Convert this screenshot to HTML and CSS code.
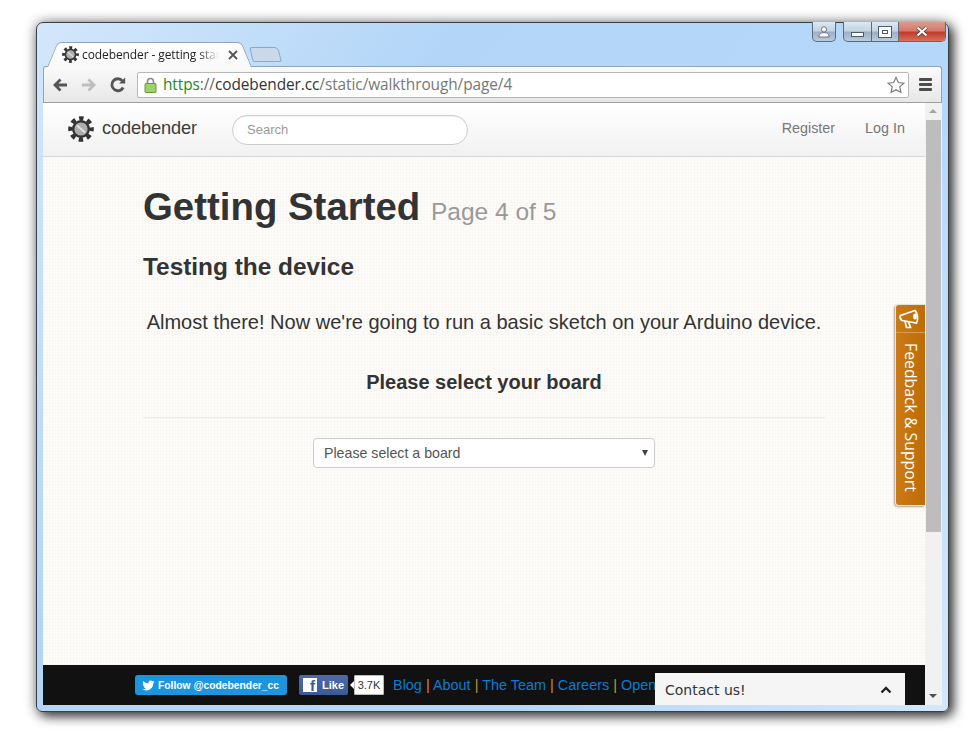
FILE: index.html
```html
<!DOCTYPE html>
<html lang="en">
<head>
<meta charset="utf-8">
<title>codebender - getting started</title>
<link rel="stylesheet" href="styles.css">
</head>
<body>
<svg class="defs" width="0" height="0" aria-hidden="true">
  <symbol id="gear" viewBox="0 0 26 26">
    <circle cx="13" cy="13" r="10.6" fill="none" stroke="#333" stroke-width="4.4" stroke-dasharray="4.4 3.925" stroke-dashoffset="2.2"/>
    <circle cx="13" cy="13" r="9" fill="#333"/>
    <circle cx="13" cy="13" r="6.6" fill="#adadad"/>
    <path d="M9 9.500l8 7" stroke="#e0e0e0" stroke-width="2"/>
  </symbol>
</svg>
<div class="window">
  <div class="titlebar">
    <div class="tab">
      <svg class="tab-icon"><use href="#gear"/></svg>
      <span class="tab-title">codebender - getting started</span>
      <svg class="tab-close" viewBox="0 0 10 10"><path d="M1 1l8 8M9 1L1 9" stroke="#555" stroke-width="1.800"/></svg>
    </div>
    <div class="newtab"></div>
    <div class="controls">
      <div class="ctl-user">
        <svg width="14" height="12" viewBox="0 0 14 12"><circle cx="7" cy="3.400" r="2.600" fill="#fff" stroke="#556" stroke-width=".8"/><path d="M1.800 11c0-3.400 2-4.400 5.200-4.400s5.200 1 5.200 4.400z" fill="#fff" stroke="#556" stroke-width=".8"/></svg>
      </div>
      <div class="ctl-group">
        <div class="ctl-min"><span class="min-glyph"></span></div>
        <div class="ctl-max"><span class="max-glyph"></span></div>
        <div class="ctl-close">
          <svg width="14" height="11" viewBox="0 0 14 11"><path d="M2.500 1.500l9 8M11.500 1.500l-9 8" stroke="#3d3d3d" stroke-width="3.600"/><path d="M2.500 1.500l9 8M11.500 1.500l-9 8" stroke="#fff" stroke-width="2.200"/></svg>
        </div>
      </div>
    </div>
  </div>
  <div class="toolbar">
    <svg class="nav-icon" viewBox="0 0 18 18"><path d="M16 9H4M9.500 3.500L4 9l5.500 5.500" fill="none" stroke="#555" stroke-width="2.800"/></svg>
    <svg class="nav-icon" viewBox="0 0 18 18"><path d="M2 9h12M8.500 3.500L14 9l-5.500 5.500" fill="none" stroke="#bdbdbd" stroke-width="2.800"/></svg>
    <svg class="nav-icon" viewBox="0 0 18 18"><path d="M14.200 11.500A6 6 0 1 1 13.400 4.800" fill="none" stroke="#555" stroke-width="2.800"/><path d="M10 7.600h6.200V1.400z" fill="#555"/></svg>
    <div class="omnibox">
      <svg class="lock" viewBox="0 0 13 16"><path d="M3.500 7V4.500a3 3 0 0 1 6 0V7" fill="none" stroke="#8a8a8a" stroke-width="1.600"/><rect x="1" y="6.500" width="11" height="9" rx="1" fill="#9ed36a" stroke="#5d9b34"/></svg>
      <span class="url"><span class="url-scheme">https</span><span class="url-sep">://</span><span class="url-host">codebender.cc</span><span class="url-path">/static/walkthrough/page/4</span></span>
      <svg class="star" viewBox="0 0 20 20"><path d="M10 1.500l2.600 5.700 6.200.7-4.600 4.200 1.300 6.100L10 15.200l-5.500 3 1.300-6.100L1.200 7.900l6.200-.7z" fill="#fff" stroke="#7b7b7b" stroke-width="1.300"/></svg>
    </div>
    <div class="menu"><span></span><span></span><span></span></div>
  </div>
  <div class="viewport">
    <div class="page">
      <nav class="navbar">
        <a class="brand">
          <svg class="brand-icon"><use href="#gear"/></svg>
          <span class="brand-name">codebender</span>
        </a>
        <div class="search">Search</div>
        <div class="nav-links"><a>Register</a><a>Log In</a></div>
      </nav>
      <main class="content">
        <h1 class="title">Getting Started <small>Page 4 of 5</small></h1>
        <h2 class="subtitle">Testing the device</h2>
        <p class="lead">Almost there! Now we're going to run a basic sketch on your Arduino device.</p>
        <h3 class="board-heading">Please select your board</h3>
        <hr class="rule">
        <div class="select"><span>Please select a board</span><i class="caret"></i></div>
      </main>
      <footer class="footer">
        <a class="tw-btn">
          <svg class="tw-bird" viewBox="0 0 24 24"><path fill="#fff" d="M23 4.900c-.8.400-1.700.600-2.600.700.900-.600 1.700-1.400 2-2.500-.900.500-1.900.900-2.900 1.100a4.600 4.600 0 0 0-7.800 4.200C7.900 8.200 4.500 6.400 2.200 3.600c-1.200 2.100-.600 4.800 1.400 6.100-.7 0-1.400-.2-2.100-.6 0 2.200 1.600 4.200 3.700 4.600-.7.200-1.400.2-2.100.1.600 1.900 2.300 3.200 4.300 3.200A9.300 9.300 0 0 1 .6 18.900c2.100 1.300 4.500 2.100 7.100 2.100 8.600 0 13.400-7.200 13.100-13.700.9-.7 1.700-1.500 2.200-2.400z"/></svg>
          <span>Follow @codebender_cc</span>
        </a>
        <a class="fb-btn"><span class="fb-f">f</span>Like</a>
        <span class="fb-count">3.7K</span>
        <span class="foot-links"><a>Blog</a> | <a>About</a> | <a>The Team</a> | <a>Careers</a> | <a>Open</a></span>
      </footer>
    </div>
    <div class="scrollbar">
      <i class="arrow-up"></i>
      <div class="track"><div class="thumb"></div></div>
      <i class="arrow-down"></i>
    </div>
    <aside class="feedback">
      <div class="fb-head">
        <svg width="23" height="20" viewBox="0 0 23 20"><path d="M1.500 6.500L16 1.500c2.500 2 3.500 9 1.500 12.500L3 11.500c-1.500-.5-2.500-3.500-1.500-5z" fill="none" stroke="#fff" stroke-width="1.700"/><path d="M6 12l1.500 6.500h4L9.500 13" fill="none" stroke="#fff" stroke-width="1.700"/><ellipse cx="16" cy="7.500" rx="1.800" ry="3" fill="#fff"/><path d="M1.500 6.500c-1 1.500-.5 3.500 1.500 5" fill="#fff" stroke="#fff"/></svg>
      </div>
      <div class="fb-label">Feedback &amp; Support</div>
    </aside>
    <div class="contact"><span>Contact us!</span>
      <svg width="12" height="8" viewBox="0 0 12 8"><path d="M1.500 6.500L6 2l4.500 4.500" fill="none" stroke="#222" stroke-width="2.400"/></svg>
    </div>
  </div>
</div>
</body>
</html>
```
FILE: styles.css
```css
* { box-sizing: border-box; }
html, body { margin: 0; height: 100%; }
body {
  background: #fff;
  font-family: "Liberation Sans", Arial, sans-serif;
  overflow: hidden;
  padding: 22px 0 0 36px;
}
.defs { position: absolute; }
a { color: inherit; text-decoration: none; }

.window {
  width: 913px;
  height: 690px;
  border: 1px solid #3a3f45;
  border-radius: 7px 7px 6px 6px;
  background: linear-gradient(125deg, #d3e7fb 0%, #b3d6f8 30%, #b5d8fa 70%, #d2e7fc 100%);
  box-shadow: 4px 4px 12px rgba(0,0,0,.78), 0 0 14px rgba(0,0,0,.32);
  padding: 0 6px 6px;
  display: flex;
  flex-direction: column;
}

.titlebar {
  height: 43px;
  flex: none;
  display: flex;
  align-items: flex-end;
  position: relative;
  padding-left: 4px;
}
.tab {
  width: 205px;
  height: 25px;
  margin-bottom: -1px;
  position: relative;
  z-index: 1;
  display: flex;
  align-items: center;
  padding: 0 14px 0 15px;
  gap: 3px;
}
.tab::before, .tab::after {
  content: "";
  position: absolute;
  top: 0;
  bottom: 0;
  width: 60%;
  z-index: -1;
  background: linear-gradient(#fff, #f9f9f9);
  border-top: 1px solid #8fa4b8;
}
.tab::before {
  left: 0;
  border-left: 1px solid #8fa4b8;
  border-radius: 5px 0 0 0;
  transform: skewX(-22.600deg);
  transform-origin: bottom left;
}
.tab::after {
  right: 0;
  border-right: 1px solid #8fa4b8;
  border-radius: 0 5px 0 0;
  transform: skewX(22.600deg);
  transform-origin: bottom right;
}
.tab-icon { width: 17px; height: 17px; flex: none; }
.tab-title {
  flex: 1;
  min-width: 0;
  overflow: hidden;
  white-space: nowrap;
  font: 12px "Open Sans", sans-serif;
  color: #222;
  -webkit-mask-image: linear-gradient(90deg, #000 85%, transparent);
  mask-image: linear-gradient(90deg, #000 85%, transparent);
  letter-spacing: -.1px;
}
.tab-close { width: 10px; height: 10px; flex: none; margin-left: 6px; }
.newtab {
  width: 29px;
  height: 15px;
  margin: 0 0 4px -1px;
  background: #c9d9ea;
  border: 1px solid #92a8bd;
  border-radius: 3px 4px 2px 2px;
  transform: skewX(14deg);
}
.controls {
  position: absolute;
  top: -1px;
  right: -4px;
  display: flex;
  gap: 7px;
}
.ctl-user, .ctl-group {
  height: 20px;
  border: 1px solid #5a6b7c;
  border-top: none;
  border-radius: 0 0 5px 5px;
  background: linear-gradient(#dce8f3 0%, #c4d4e3 45%, #9db2c8 55%, #b9cadb 100%);
}
.ctl-user {
  width: 24px;
  display: flex;
  align-items: center;
  justify-content: center;
}
.ctl-group { display: flex; width: 103px; overflow: hidden; }
.ctl-min, .ctl-max {
  display: flex;
  align-items: center;
  justify-content: center;
  border-right: 1px solid #5a6b7c;
}
.ctl-min { width: 28px; padding-top: 6px; }
.ctl-max { width: 27px; }
.min-glyph { width: 13px; height: 5px; background: #fff; border: 1px solid #4d5a68; }
.max-glyph { width: 12px; height: 10px; background: #fff; border: 3px solid #fff; outline: 1px solid #4d5a68; box-shadow: inset 0 0 0 1px #4d5a68; }
.ctl-close {
  flex: 1;
  display: flex;
  align-items: center;
  justify-content: center;
  background: linear-gradient(#dd9a8f 0%, #d47a6c 45%, #c13c2a 55%, #d5705e 100%);
}

.toolbar {
  height: 37px;
  flex: none;
  background: linear-gradient(#fafafa, #e7e7e7);
  border: 1px solid #8fa4b8;
  border-bottom: 1px solid #a0a0a0;
  border-radius: 3px 3px 0 0;
  display: flex;
  align-items: center;
  padding-left: 7px;
  gap: 11px;
}
.nav-icon { width: 18px; height: 18px; flex: none; }
.omnibox {
  flex: 1;
  height: 26px;
  margin-left: -1px;
  background: #fff;
  border: 1px solid #b8b8b8;
  border-radius: 2px;
  display: flex;
  align-items: center;
  padding: 0 3px 0 6px;
}
.lock { width: 13px; height: 16px; flex: none; margin-right: 6px; }
.url { flex: 1; font: 15.400px "Open Sans", sans-serif; white-space: nowrap; letter-spacing: -.07px; }
.url-scheme { color: #1a8a1a; }
.url-sep { color: #666; }
.url-host { color: #333; }
.url-path { color: #777; }
.star { width: 18px; height: 18px; flex: none; }
.menu {
  width: 13px;
  flex: none;
  margin-right: 9px;
  margin-left: -1px;
  display: flex;
  flex-direction: column;
  gap: 2px;
}
.menu span { height: 3px; background: #4c4c4c; border-radius: 1px; }

.viewport {
  flex: 1;
  display: flex;
  position: relative;
  min-height: 0;
  background: #fff;
}
.page { flex: 1; min-width: 0; display: flex; flex-direction: column; }

.navbar {
  height: 54px;
  flex: none;
  background: linear-gradient(#fff, #f1f1f1);
  border-bottom: 1px solid #d8d8d8;
  display: flex;
  align-items: center;
  padding-left: 25px;
  padding-right: 20px;
}
.brand { display: flex; align-items: center; gap: 8px; width: 164px; padding-bottom: 2px; }
.brand-icon { width: 26px; height: 26px; }
.brand-name { font-size: 18.200px; color: #3c3c3c; letter-spacing: -.1px; }
.search {
  width: 236px;
  height: 30px;
  border: 1px solid #ccc;
  border-radius: 15px;
  background: #fff;
  box-shadow: inset 0 1px 1px rgba(0,0,0,.06);
  font-size: 13px;
  line-height: 27px;
  color: #999;
  padding-left: 14px;
}
.nav-links { margin-left: auto; display: flex; gap: 30px; font-size: 14.350px; color: #777; padding-bottom: 4px; }

.content {
  flex: 1;
  min-height: 0;
  background-color: #fdfcfa;
  background-image:
    repeating-linear-gradient(0deg, rgba(245,241,233,.35) 0 1px, transparent 1px 3px),
    repeating-linear-gradient(90deg, rgba(245,241,233,.35) 0 1px, transparent 1px 3px);
  padding: 26px 100px 0;
  color: #333;
}
.title { margin: 0; font-size: 38.400px; line-height: 48px; font-weight: bold; color: #333; white-space: nowrap; }
.title small { font-size: 24.500px; font-weight: normal; color: #999; }
.subtitle { margin: 15px 0 0; font-size: 24.400px; line-height: 32px; font-weight: bold; }
.lead { margin: 24px 0 0; font-size: 20.030px; line-height: 30px; text-align: center; white-space: nowrap; }
.board-heading { margin: 30px 0 0; font-size: 20px; line-height: 30px; font-weight: bold; text-align: center; }
.rule { border: 0; border-top: 1px solid #ececea; margin: 20px 0 20px; }
.select {
  width: 342px;
  height: 30px;
  margin: 0 auto;
  background: #fff;
  border: 1px solid #ccc;
  border-radius: 4px;
  display: flex;
  align-items: center;
  justify-content: space-between;
  padding: 0 6px 0 10px;
  font-size: 14.200px;
  color: #555;
}
.caret {
  border-left: 3px solid transparent;
  border-right: 3px solid transparent;
  border-top: 6px solid #444;
}

.footer {
  height: 40px;
  flex: none;
  background: #111;
  display: flex;
  align-items: center;
  padding-left: 92px;
  white-space: nowrap;
  overflow: hidden;
}
.tw-btn {
  width: 152px;
  height: 20px;
  flex: none;
  background: #1b95e0;
  border-radius: 3px;
  color: #fff;
  font-size: 10.300px;
  font-weight: bold;
  display: flex;
  align-items: center;
  padding-left: 7px;
  gap: 3px;
}
.tw-bird { width: 13px; height: 13px; }
.fb-btn {
  width: 49px;
  height: 20px;
  flex: none;
  margin-left: 12px;
  background: linear-gradient(#4f6aa8, #3b5998);
  border-radius: 2px;
  color: #fff;
  font-size: 11px;
  font-weight: bold;
  display: flex;
  align-items: center;
  padding-left: 4px;
  gap: 5px;
}
.fb-f {
  width: 14px;
  height: 14px;
  background: #fff;
  color: #3b5998;
  font-size: 15px;
  line-height: 16px;
  text-align: right;
  padding-right: 2px;
  overflow: hidden;
}
.fb-count {
  width: 30px;
  height: 20px;
  flex: none;
  margin-left: 6px;
  background: #fff;
  border: 1px solid #bbb;
  border-radius: 1px;
  font-size: 11px;
  line-height: 18px;
  color: #333;
  text-align: center;
  position: relative;
}
.fb-count::before {
  content: "";
  position: absolute;
  left: -5px;
  top: 5px;
  border-top: 4px solid transparent;
  border-bottom: 4px solid transparent;
  border-right: 4px solid #fff;
}
.foot-links { margin-left: 9px; font-size: 14.450px; color: #c9913c; }
.foot-links a { color: #0d7bd0; }

.scrollbar {
  width: 17px;
  flex: none;
  background: #f1f1f1;
  display: flex;
  flex-direction: column;
  align-items: center;
}
.arrow-up, .arrow-down { height: 17px; width: 17px; flex: none; position: relative; }
.arrow-up::after, .arrow-down::after {
  content: "";
  position: absolute;
  left: 4px;
  top: 6px;
  border-left: 4px solid transparent;
  border-right: 4px solid transparent;
}
.arrow-up::after { border-bottom: 4px solid #a3a3a3; }
.arrow-down::after { border-top: 4px solid #505050; }
.track { flex: 1; width: 100%; padding: 0 1px; }
.thumb { height: 412px; background: #bdbdbd; }

.feedback {
  position: absolute;
  top: 201px;
  left: 852px;
  width: 30px;
  height: 202px;
  background: linear-gradient(90deg, #cc7a16, #bd6c06);
  border: 1px solid #e6e2dc;
  border-right: none;
  border-radius: 4px 0 0 4px;
  box-shadow: -1px 1px 2px rgba(0,0,0,.35);
  color: #fff;
}
.fb-head {
  height: 28px;
  border-bottom: 1px solid #dd9a4c;
  display: flex;
  align-items: center;
  justify-content: center;
}
.fb-label {
  writing-mode: vertical-rl;
  font: 15.800px/29px "Open Sans", sans-serif;
  padding-top: 10px;
  white-space: nowrap;
}

.contact {
  position: absolute;
  left: 612px;
  bottom: 0;
  width: 250px;
  height: 32px;
  background: #f5f5f5;
  display: flex;
  align-items: center;
  justify-content: space-between;
  padding: 2px 13px 0 10px;
  font: 14px "DejaVu Sans", sans-serif;
  color: #333;
}
```
